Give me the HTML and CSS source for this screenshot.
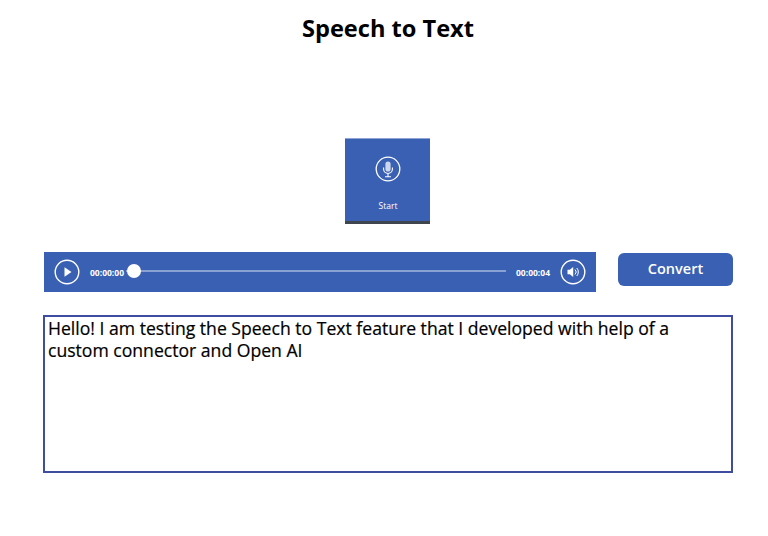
FILE: index.html
```html
<!DOCTYPE html>
<html lang="en">
<head>
<meta charset="utf-8">
<title>Speech to Text</title>
<link rel="stylesheet" href="styles.css">
</head>
<body>
<main class="screen">
  <h1 class="title">Speech to Text</h1>
  <div class="mic-row">
    <button class="mic">
      <svg class="mic-icon" viewBox="0 0 26 26" width="26" height="26" fill="none" stroke="#fff">
        <circle cx="13" cy="13" r="11.8" stroke-width="1.3"/>
        <rect x="10.4" y="5.5" width="5.2" height="10" rx="2.6" fill="#fff" fill-opacity=".75" stroke="none"/>
        <path d="M8.6 11.5v1.6a4.4 4.4 0 0 0 8.8 0v-1.6M13 17.5v3M10 20.7h6" stroke-width="1.1"/>
      </svg>
      <span class="mic-label">Start</span>
    </button>
  </div>
  <div class="controls">
    <div class="player">
      <svg class="round" viewBox="0 0 26 26" width="26" height="26" fill="none" stroke="#fff">
        <circle cx="13" cy="13" r="11.8" stroke-width="1.4"/>
        <path d="M10.5 8.2l7 4.8-7 4.8z" fill="#fff" stroke="none"/>
      </svg>
      <span class="time time-start">00:00:00</span>
      <div class="track"><span class="thumb"></span></div>
      <span class="time time-end">00:00:04</span>
      <svg class="round" viewBox="0 0 26 26" width="26" height="26" fill="none" stroke="#fff">
        <circle cx="13" cy="13" r="11.8" stroke-width="1.4"/>
        <path d="M7.5 10.8h2.3l3.4-2.8v10l-3.4-2.8H7.5z" fill="#fff" stroke="none"/>
        <path d="M15 10.5a3.5 3.5 0 0 1 0 5M16.8 9a6 6 0 0 1 0 8" stroke-width="1"/>
      </svg>
    </div>
    <button class="convert">Convert</button>
  </div>
  <div class="output">Hello! I am testing the Speech to Text feature that I developed with help of a custom connector and Open AI</div>
</main>
</body>
</html>
```
FILE: styles.css
```css
* { box-sizing: border-box; }
html, body { margin: 0; background: #fff; }
body { width: 768px; height: 536px; overflow: hidden; font-family: "Open Sans", sans-serif; color: #000; }
.screen { display: flex; flex-direction: column; padding: 0 35px 0 43px; }
.title { margin: 13px 0 0; height: 30px; font-size: 23.6px; line-height: 30px; font-weight: 700; text-align: center; }
.mic-row { display: flex; justify-content: center; margin-top: 95px; }
.mic { width: 85px; height: 86px; margin-left: -2px; padding: 17px 0 0 2px; border: 1px solid #8fa5d6; border-width: 1px 0 3px; border-bottom-color: #3f4650; background: #3a60b3; color: #fff; display: flex; flex-direction: column; align-items: center; font-family: inherit; }
.mic-icon { display: block; }
.mic-label { font-size: 8.5px; line-height: 12px; margin-top: 18px; }
.controls { display: flex; align-items: flex-start; gap: 22px; margin-top: 28px; }
.player { width: 552px; height: 40px; margin-left: 1px; background: #3a60b3; display: flex; align-items: center; padding: 0 10px; color: #fff; }
.time { font-size: 8.5px; font-weight: 700; width: 36px; flex: none; white-space: nowrap; }
.time-start { margin-left: 10px; }
.time-end { margin-right: 8px; margin-left: 10px; }
.track { flex: 1; height: 2px; background: #8aa1d4; position: relative; margin-top: -3px; }
.thumb { position: absolute; left: 1px; top: -6px; width: 14px; height: 14px; border-radius: 50%; background: #fff; }
.convert { width: 115px; height: 33px; margin-top: 1px; padding: 0 0 2px; border: 0; border-radius: 6px; background: #3a60b3; color: #fff; font-family: inherit; font-size: 14.5px; font-weight: 600; }
.output { margin-top: 23px; width: 690px; height: 158px; border: 2px solid #3f4da0; padding: 0 3px; font-size: 17.6px; line-height: 22px; -webkit-text-stroke: 0.2px #000; }
```
